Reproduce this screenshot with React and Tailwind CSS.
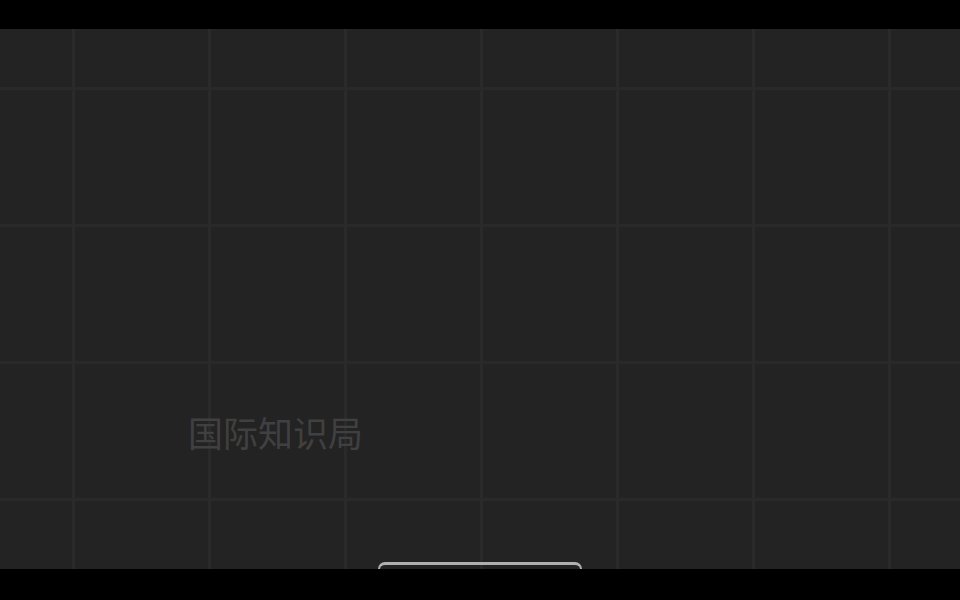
export default function App() {
  return (
    <div className="w-[960px] h-[600px] bg-black flex flex-col overflow-hidden">
      {/* top strip */}
      <div className="h-[29px] bg-black shrink-0"></div>

      {/* grid canvas */}
      <div className="h-[540px] shrink-0 flex flex-col bg-[#232323] bg-[linear-gradient(to_right,#2a2a2a_3px,transparent_3px),linear-gradient(to_bottom,#292929_3px,transparent_3px)] bg-[size:136px_137px] bg-[position:72px_58px]">
        <div className="pl-[188px] pt-[385px]">
          <span className="text-[35px] leading-none text-[#404040] font-['Noto_Sans_CJK_SC',sans-serif]">
            国际知识局
          </span>
        </div>
        <div className="flex-1"></div>
        <div className="flex justify-center">
          <div className="w-[204px] h-[7px] border-t-[3px] border-x-2 border-[#b0b0b0] rounded-t-[14px]"></div>
        </div>
      </div>

      {/* bottom strip */}
      <div className="flex-1 bg-black"></div>
    </div>
  );
}
